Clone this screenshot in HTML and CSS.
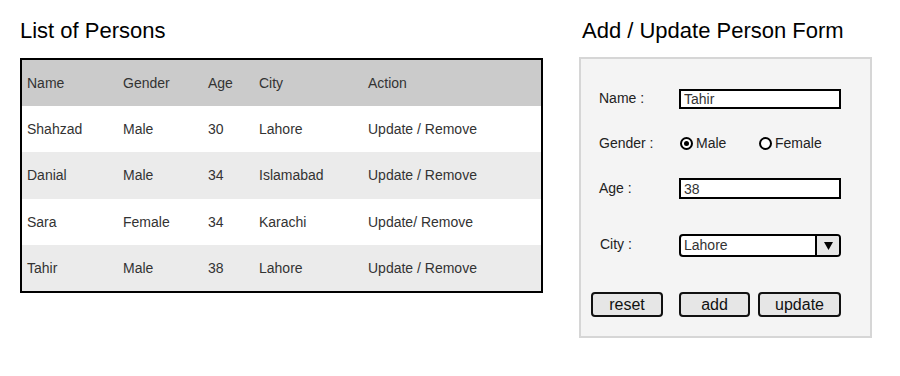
FILE: index.html
```html
<!DOCTYPE html>
<html lang="en">
<head>
    <meta charset="UTF-8">
    <meta name="viewport" content="width=device-width, initial-scale=1.0">
    <title>Persons</title>
    <link rel="stylesheet" href="styles.css">
</head>
<body>
    <div class="page">
        <div class="list">
            <h1>List of Persons</h1>
            <table class="persons">
                <tr class="head">
                    <td class="c-name">Name</td>
                    <td class="c-gender">Gender</td>
                    <td class="c-age">Age</td>
                    <td class="c-city">City</td>
                    <td>Action</td>
                </tr>
                <tr>
                    <td>Shahzad</td><td>Male</td><td>30</td><td>Lahore</td><td>Update / Remove</td>
                </tr>
                <tr class="alt">
                    <td>Danial</td><td>Male</td><td>34</td><td>Islamabad</td><td>Update / Remove</td>
                </tr>
                <tr>
                    <td>Sara</td><td>Female</td><td>34</td><td>Karachi</td><td>Update/ Remove</td>
                </tr>
                <tr class="alt">
                    <td>Tahir</td><td>Male</td><td>38</td><td>Lahore</td><td>Update / Remove</td>
                </tr>
            </table>
        </div>

        <div class="form-side">
            <h1 class="form-title">Add / Update Person Form</h1>
            <div class="panel">
                <div class="row row-name">
                    <label class="lbl">Name :</label>
                    <input class="field" type="text" value="Tahir">
                </div>
                <div class="row row-gender">
                    <label class="lbl">Gender :</label>
                    <label class="opt"><input type="radio" name="gender" checked> Male</label>
                    <label class="opt opt-female"><input type="radio" name="gender"> Female</label>
                </div>
                <div class="row row-age">
                    <label class="lbl">Age :</label>
                    <input class="field" type="text" value="38">
                </div>
                <div class="row row-city">
                    <label class="lbl lbl-city">City :</label>
                    <div class="select">
                        <span class="select-text">Lahore</span>
                        <span class="select-btn">
                            <svg width="9" height="8" viewBox="0 0 9 8"><path d="M0 0 H9 L4.5 8 Z" fill="#000"/></svg>
                        </span>
                    </div>
                </div>
                <div class="row row-buttons">
                    <button class="btn btn-reset">reset</button>
                    <button class="btn btn-add">add</button>
                    <button class="btn btn-update">update</button>
                </div>
            </div>
        </div>
    </div>
</body>
</html>
```

FILE: styles.css
```css
body{
    margin: 0;
    font-family: "Liberation Sans", Arial, sans-serif;
    background: #fff;
    color: #333;
}
.page{
    display: flex;
    padding: 18px 0 0 20px;
}
h1{
    margin: 0 0 15px 0;
    font-size: 22px;
    font-weight: normal;
    color: #000;
    line-height: 25px;
}
.list{
    width: 523px;
}
.persons{
    width: 523px;
    border: 2px solid #000;
    border-collapse: collapse;
    font-size: 14px;
    color: #333;
}
.persons td{
    height: 46.6px;
    padding: 0 0 0 5px;
    box-sizing: border-box;
}
.persons tr.head{
    background-color: #cbcbcb;
}
.persons tr.alt{
    background-color: #ebebeb;
}
.c-name{ width: 97px; }
.c-gender{ width: 85px; }
.c-age{ width: 51px; }
.c-city{ width: 109px; }

.form-side{
    margin-left: 36px;
}
.form-title{
    margin-left: 3px;
    margin-bottom: 14px;
}
.panel{
    width: 293px;
    height: 281px;
    box-sizing: border-box;
    background-color: #f4f4f4;
    border: 2px solid #d6d6d6;
    padding: 0 0 0 10px;
}
.row{
    display: flex;
    align-items: center;
    font-size: 14px;
    color: #222;
}
.lbl{
    width: 80px;
    margin-left: 8px;
}
.lbl-city{
    margin-left: 9px;
    width: 79px;
}
.row-name{ margin-top: 30px; height: 20px; }
.row-gender{ margin-top: 24px; height: 20px; }
.row-age{ margin-top: 25px; height: 21px; }
.row-city{ margin-top: 35px; height: 23px; }
.row-buttons{ margin-top: 35px; height: 25px; }

.row-name .lbl{ margin-top: -2px; }
.row-age .lbl{ margin-top: -2px; }
.row-city .lbl{ margin-top: -4px; }

.field{
    width: 162px;
    height: 100%;
    box-sizing: border-box;
    border: 2px solid #000;
    background: #fff;
    padding: 0 0 0 3px;
    margin: 0;
    font-family: inherit;
    font-size: 14px;
    color: #333;
    outline: none;
}
.opt{
    display: flex;
    align-items: center;
    width: 79px;
    color: #222;
}
.opt input{
    appearance: none;
    -webkit-appearance: none;
    width: 13px;
    height: 13px;
    margin: 0 3px 0 1px;
    border: 2px solid #000;
    border-radius: 50%;
    background: #fff;
    box-sizing: border-box;
    position: relative;
}
.opt input:checked::after{
    content: "";
    position: absolute;
    left: 2px;
    top: 2px;
    width: 5px;
    height: 5px;
    border-radius: 50%;
    background: #000;
}
.select{
    display: flex;
    width: 162px;
    height: 100%;
    box-sizing: border-box;
    border: 2px solid #000;
    border-radius: 4px;
    background: #fff;
    overflow: hidden;
}
.select-text{
    flex: 1;
    padding-left: 3px;
    line-height: 19px;
    color: #333;
}
.select-btn{
    width: 22px;
    border-left: 2px solid #000;
    background: #e6e6e6;
    display: flex;
    align-items: center;
    justify-content: center;
}
.btn{
    height: 25px;
    box-sizing: border-box;
    border: 2px solid #111;
    border-radius: 4px;
    background: #e6e6e6;
    font-family: inherit;
    font-size: 16px;
    color: #111;
    padding: 0;
    cursor: pointer;
}
.btn-reset{ width: 72px; }
.btn-add{ width: 71px; margin-left: 16px; }
.btn-update{ width: 83px; margin-left: 8px; }
```
